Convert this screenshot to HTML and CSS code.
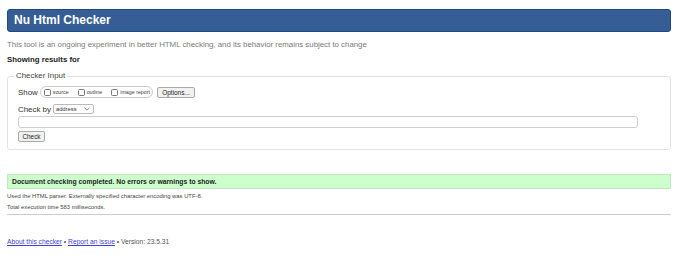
FILE: index.html
```html
<!DOCTYPE html>
<html lang="en">
<head>
    <meta charset="UTF-8">
    <meta name="viewport" content="width=device-width, initial-scale=1.0">
    <title>Nu Html Checker</title>
    <link rel="stylesheet" href="styles.css">
</head>
<body>
<h1 class="title">Nu Html Checker</h1>
<p class="intro">This tool is an ongoing experiment in better HTML checking, and its behavior remains subject to change</p>
<p class="showing">Showing results for</p>

<form class="checker">
    <fieldset>
        <legend>Checker Input</legend>
        <div class="row show-row">
            <span class="label">Show</span>
            <span class="show-group">
                <label><input type="checkbox"> source</label>
                <label><input type="checkbox"> outline</label>
                <label><input type="checkbox"> image report</label>
            </span>
            <button type="button" class="btn options">Options...</button>
        </div>
        <div class="row">
            <span class="label">Check by</span>
            <span class="select">address
                <svg width="6" height="4" viewBox="0 0 6 4"><path d="M0.5 0.8 L3 3.2 L5.5 0.8" fill="none" stroke="#666" stroke-width="0.8"/></svg>
            </span>
        </div>
        <input type="text" class="doc-input">
        <button type="button" class="btn check">Check</button>
    </fieldset>
</form>

<p class="success">Document checking completed. No errors or warnings to show.</p>
<p class="details">Used the HTML parser. Externally specified character encoding was UTF-8.</p>
<p class="details">Total execution time 583 milliseconds.</p>
<hr>

<p class="footer">
    <a href="#">About this checker</a> &bull; <a href="#">Report an issue</a> &bull; Version: 23.5.31
</p>
</body>
</html>
```

FILE: styles.css
```css
body {
    margin: 0;
    padding: 9px 9px 0 7px;
    font-family: "Liberation Sans", Arial, sans-serif;
    color: #222;
    background-color: #fff;
}

p {
    margin: 0;
}

.title {
    margin: 0;
    height: 23px;
    box-sizing: border-box;
    padding-left: 6px;
    background-color: #365d95;
    border: 1px solid #1d4a86;
    border-radius: 3px;
    color: #fff;
    font-size: 12px;
    line-height: 21px;
    font-weight: bold;
}

.intro {
    margin-top: 8px;
    font-size: 7.85px;
    line-height: 10px;
    color: #7a7a7a;
}

.showing {
    margin-top: 5px;
    font-size: 7.8px;
    line-height: 10px;
    font-weight: bold;
}

.checker fieldset {
    margin: 6px 0 0;
    padding: 0 10px 7px 10px;
    border: 1px solid #e2e2e2;
    border-radius: 3px;
}

.checker legend {
    margin-left: -4px;
    padding: 0 2px;
    font-size: 7.9px;
    line-height: 10px;
    color: #444;
}

.row {
    display: flex;
    align-items: center;
    height: 12px;
    margin-top: 5px;
    font-size: 7.9px;
    color: #333;
}

.label {
    margin-right: 2px;
}

.show-group {
    display: flex;
    align-items: center;
    gap: 9px;
    height: 10px;
    padding: 0 2px 0 3px;
    border: 1px solid #ccc;
    border-radius: 6px;
    font-size: 5.3px;
    color: #444;
}

.show-group label {
    display: flex;
    align-items: center;
    gap: 2px;
}

.show-group input {
    appearance: none;
    width: 7px;
    height: 7px;
    margin: 0;
    border: 0.8px solid #777;
    border-radius: 1.5px;
    background: #fff;
}

.btn {
    height: 11px;
    padding: 0 4px;
    border: 1px solid #aaa;
    border-radius: 2px;
    background-color: #f1f1f1;
    font-family: "Liberation Sans", Arial, sans-serif;
    font-size: 6.4px;
    line-height: 9px;
    color: #222;
}

.options {
    margin-left: 4px;
    width: 38px;
}

.select {
    display: inline-flex;
    align-items: center;
    justify-content: space-between;
    box-sizing: border-box;
    width: 41px;
    height: 10px;
    padding: 0 3px 0 2px;
    border: 1px solid #bbb;
    border-radius: 2px;
    font-size: 5.8px;
    color: #333;
}

.doc-input {
    display: block;
    box-sizing: border-box;
    width: 620px;
    height: 12px;
    margin: 1px 0 0;
    padding: 0;
    border: 1px solid #cfcfcf;
    border-radius: 3px;
}

.check {
    display: block;
    width: 27px;
    margin-top: 3px;
    padding: 0;
}

.success {
    margin-top: 24px;
    height: 15px;
    box-sizing: border-box;
    padding-left: 4px;
    background-color: #ccffcc;
    border: 1px solid #bfe8bf;
    font-size: 6.8px;
    line-height: 13px;
    font-weight: bold;
    color: #222;
}

.details {
    font-size: 5.85px;
    line-height: 11px;
    color: #444;
}

.success + .details {
    margin-top: 2px;
}

hr {
    margin: 1px 0 0;
    border: none;
    border-top: 1px solid #ccc;
}

.footer {
    margin-top: 22px;
    font-size: 6.7px;
    line-height: 10px;
    color: #555;
}

.footer a {
    color: #3f3fd6;
}
```
